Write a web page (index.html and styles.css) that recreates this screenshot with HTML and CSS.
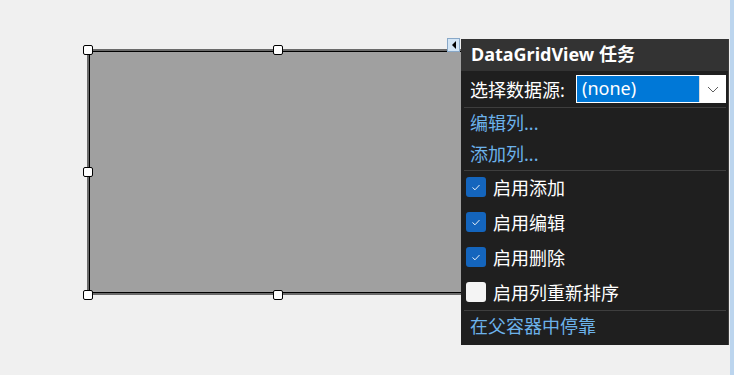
FILE: index.html
```html
<!DOCTYPE html>
<html lang="zh-CN">
<head>
<meta charset="utf-8">
<title>DataGridView 任务</title>
<link rel="stylesheet" href="styles.css">
</head>
<body>
<div class="screen">
  <div class="surface">
    <div class="grid-control">
      <div class="grid-inner"></div>
    </div>
    <span class="handle h-tl"></span>
    <span class="handle h-tc"></span>
    <span class="handle h-ml"></span>
    <span class="handle h-bl"></span>
    <span class="handle h-bc"></span>
    <span class="smart-tag"><svg width="6" height="8" viewBox="0 0 6 8"><polygon points="5,0 5,8 1,4" fill="#000"/></svg></span>
    <div class="tasks">
      <div class="tasks-title">DataGridView 任务</div>
      <div class="tasks-body">
        <div class="row-source">
          <span class="label">选择数据源:</span>
          <div class="combo">
            <span class="combo-value">(none)</span>
            <span class="combo-btn"><svg width="12" height="7" viewBox="0 0 12 7"><polyline points="1,1 6,6 11,1" fill="none" stroke="#606060" stroke-width="1"/></svg></span>
          </div>
        </div>
        <div class="sep"></div>
        <div class="links">
          <a class="link">编辑列...</a>
          <a class="link">添加列...</a>
        </div>
        <div class="sep"></div>
        <div class="checks">
          <div class="check-row"><span class="box on"><svg width="20" height="20" viewBox="0 0 20 20"><polyline points="6.5,10.5 9,12.8 13.5,8" fill="none" stroke="#fff" stroke-width="0.9"/></svg></span><span class="label">启用添加</span></div>
          <div class="check-row"><span class="box on"><svg width="20" height="20" viewBox="0 0 20 20"><polyline points="6.5,10.5 9,12.8 13.5,8" fill="none" stroke="#fff" stroke-width="0.9"/></svg></span><span class="label">启用编辑</span></div>
          <div class="check-row"><span class="box on"><svg width="20" height="20" viewBox="0 0 20 20"><polyline points="6.5,10.5 9,12.8 13.5,8" fill="none" stroke="#fff" stroke-width="0.9"/></svg></span><span class="label">启用删除</span></div>
          <div class="check-row"><span class="box off"></span><span class="label">启用列重新排序</span></div>
        </div>
        <div class="sep"></div>
        <div class="dock"><a class="link">在父容器中停靠</a></div>
      </div>
    </div>
  </div>
  <div class="edge"></div>
</div>
</body>
</html>
```

FILE: styles.css
```css
html, body {
  margin: 0;
  padding: 0;
}
body {
  background: #f0f0f0;
  font-family: "Noto Sans", "Noto Sans CJK SC", sans-serif;
  width: 734px;
  height: 375px;
  overflow: hidden;
}
.screen {
  display: flex;
  width: 734px;
  height: 375px;
}
.surface {
  position: relative;
  flex: 1;
  padding: 49px 0 0 87px;
  box-sizing: border-box;
}
.edge {
  width: 4px;
  background: #bcd5ee;
}
.grid-control {
  width: 382px;
  height: 246px;
  border: 2px solid #6a6a6a;
  box-sizing: border-box;
}
.grid-inner {
  height: 100%;
  border: 1px solid #000;
  box-sizing: border-box;
  background: #a0a0a0;
}
.handle {
  position: absolute;
  width: 10px;
  height: 10px;
  box-sizing: border-box;
  border: 1px solid #000;
  border-radius: 2px;
  background: #fff;
}
.h-tl { left: 83px; top: 45px; }
.h-tc { left: 273px; top: 45px; }
.h-ml { left: 83px; top: 167px; }
.h-bl { left: 83px; top: 290px; }
.h-bc { left: 273px; top: 290px; }
.smart-tag {
  position: absolute;
  left: 447px;
  top: 38px;
  width: 13px;
  height: 14px;
  box-sizing: border-box;
  background: #d3e5f5;
  border: 1px solid #88a8c8;
  display: flex;
  align-items: center;
  justify-content: center;
}
.tasks {
  position: absolute;
  left: 461px;
  top: 39px;
  width: 268px;
  height: 306px;
  background: #1f1f1f;
  border-right: 1px solid #3c3c3c;
  box-sizing: border-box;
  display: flex;
  flex-direction: column;
}
.tasks-title {
  height: 32px;
  background: #333333;
  color: #fff;
  font-weight: bold;
  font-size: 18px;
  line-height: 30px;
  padding-left: 10px;
}
.tasks-body {
  flex: 1;
  display: flex;
  flex-direction: column;
}
.label {
  color: #fff;
  font-size: 18px;
}
.row-source {
  display: flex;
  align-items: center;
  height: 36px;
  padding-left: 9px;
}
.row-source .label {
  width: 106px;
}
.combo {
  display: flex;
  width: 150px;
  height: 28px;
  border: 1px solid #fff;
  box-sizing: border-box;
}
.combo-value {
  flex: 1;
  background: #0078d7;
  color: #fff;
  font-size: 18px;
  line-height: 25px;
  padding-left: 5px;
}
.combo-btn {
  width: 25px;
  background: #fff;
  border-left: 1px solid #dcdcdc;
  display: flex;
  align-items: center;
  justify-content: center;
}
.sep {
  height: 1px;
  margin: 0 2px 0 3px;
  background: #3e3e3e;
}
.links {
  display: flex;
  flex-direction: column;
  padding: 0 0 0 9px;
}
.link {
  color: #6cb2ea;
  font-size: 18px;
  line-height: 31px;
}
.checks {
  display: flex;
  flex-direction: column;
  gap: 15px;
  padding: 6px 0 8px 5px;
}
.check-row {
  display: flex;
  align-items: center;
  height: 20px;
  gap: 7px;
}
.box {
  width: 20px;
  height: 20px;
  border-radius: 3px;
  box-sizing: border-box;
  display: flex;
}
.box.on {
  background: #1465bd;
}
.box.off {
  background: #f4f4f4;
}
.dock {
  padding-left: 9px;
  line-height: 32px;
}
```
